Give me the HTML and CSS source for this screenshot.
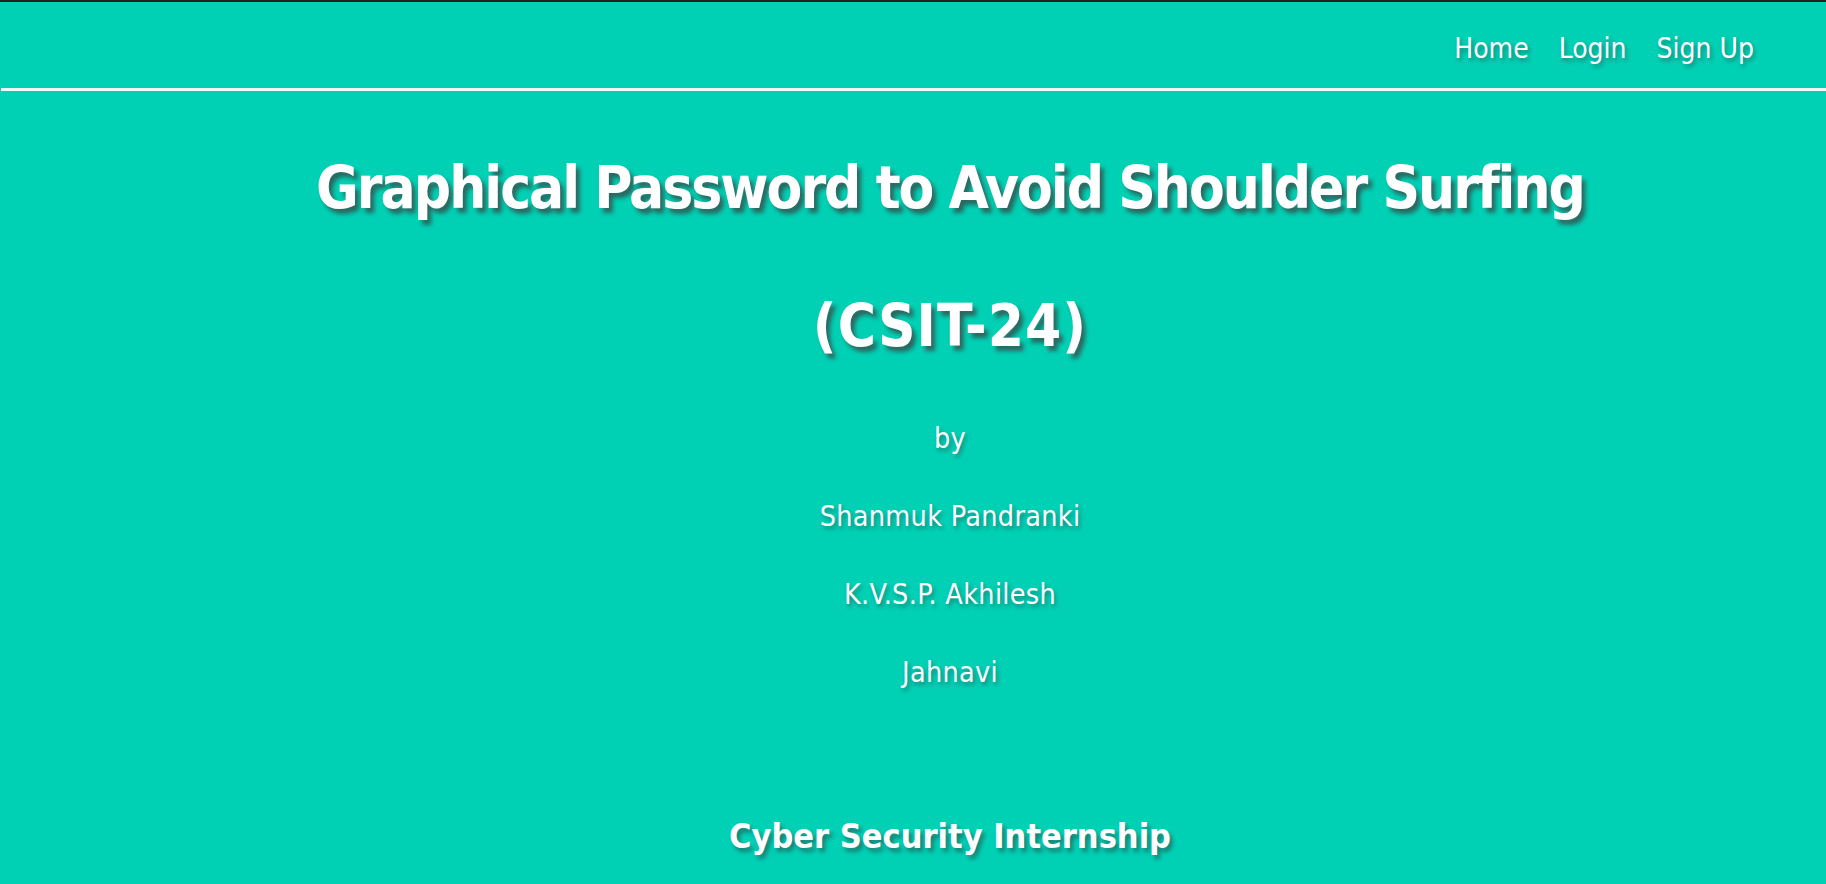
FILE: index.html
```html
<!DOCTYPE html>
<html>
<head>
<meta charset="utf-8">
<link rel="stylesheet" href="styles.css">
</head>
<body>
<header class="topbar">
  <nav class="nav">
    <a class="nav-link" href="#">Home</a>
    <a class="nav-link" href="#">Login</a>
    <a class="nav-link" href="#">Sign Up</a>
  </nav>
</header>
<main class="hero">
  <h1 class="title">Graphical Password to Avoid Shoulder Surfing</h1>
  <h1 class="title code">(CSIT-24)</h1>
  <div class="authors">
    <p class="author">by</p>
    <p class="author">Shanmuk Pandranki</p>
    <p class="author">K.V.S.P. Akhilesh</p>
    <p class="author">Jahnavi</p>
  </div>
  <h2 class="subtitle">Cyber Security Internship</h2>
</main>
</body>
</html>
```
FILE: styles.css
```css
html, body {
  margin: 0;
  padding: 0;
}
body {
  background: #00d1b5;
  border-top: 2px solid #1f2123;
  font-family: "DejaVu Sans Condensed", "DejaVu Sans", sans-serif;
  color: #ffffff;
  height: 882px;
  overflow: hidden;
}
.topbar {
  height: 86px;
  border-bottom: 3px solid #f2fbf9;
  margin-left: 1px;
  display: flex;
  justify-content: flex-end;
  align-items: center;
}
.nav {
  display: flex;
  gap: 30px;
  padding-right: 72px;
  margin-top: 6px;
}
.nav-link {
  color: #ffffff;
  text-decoration: none;
  font-size: 28px;
  text-shadow: 2px 3px 4px rgba(40, 70, 70, 0.55);
}
.hero {
  text-align: center;
  padding-left: 74px;
  padding-top: 28px;
}
.title {
  margin: 0;
  font-size: 58px;
  font-weight: bold;
  line-height: 138px;
  letter-spacing: -2px;
  text-shadow: 4px 5px 4px rgba(60, 60, 60, 0.7);
}
.code {
  letter-spacing: 1px;
}
.authors {
  margin-top: 5px;
}
.author {
  margin: 0;
  font-size: 28.5px;
  line-height: 78px;
  letter-spacing: 0.3px;
  text-shadow: 2px 3px 4px rgba(40, 70, 70, 0.55);
}
.subtitle {
  margin: 104px 0 0;
  font-size: 34px;
  font-weight: bold;
  letter-spacing: 0;
  text-shadow: 3px 4px 4px rgba(40, 70, 70, 0.6);
}
```
